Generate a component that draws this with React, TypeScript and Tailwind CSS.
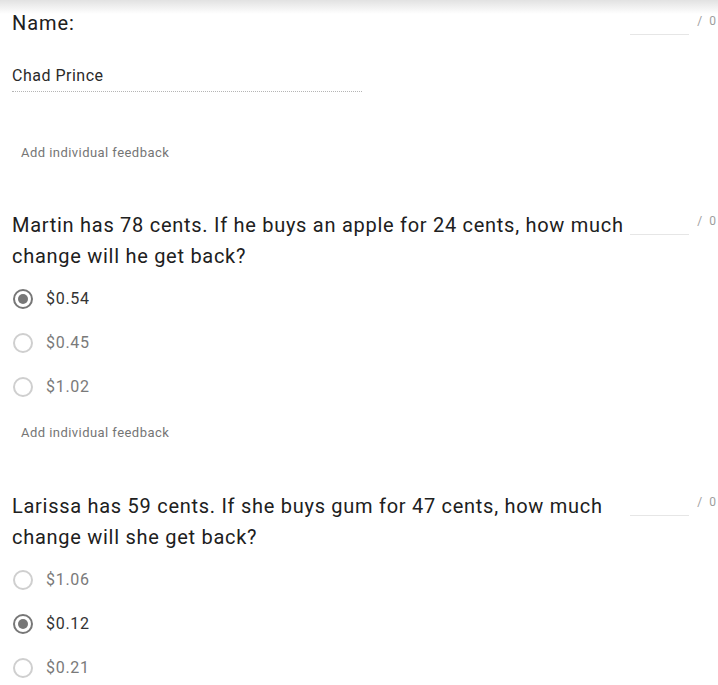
import React from "react";

type Option = { label: string; selected?: boolean };

const questions: { text: string; options: Option[]; feedback: boolean }[] = [
  {
    text: "Martin has 78 cents. If he buys an apple for 24 cents, how much change will he get back?",
    options: [{ label: "$0.54", selected: true }, { label: "$0.45" }, { label: "$1.02" }],
    feedback: true,
  },
  {
    text: "Larissa has 59 cents. If she buys gum for 47 cents, how much change will she get back?",
    options: [{ label: "$1.06" }, { label: "$0.12", selected: true }, { label: "$0.21" }],
    feedback: false,
  },
];

const Points = () => (
  <div className="w-[88px] shrink-0 flex items-start">
    <div className="w-[60px] h-[25px] border-b border-[#e6e6e6]" />
    <span className="ml-[8px] mt-[3px] whitespace-nowrap text-[12px] leading-[16px] text-[#9e9e9e] tracking-[2px]">/ 0</span>
  </div>
);

const Feedback = () => (
  <div className="ml-[9px] text-[13px] leading-[16px] tracking-[0.45px] text-[#757575]">Add individual feedback</div>
);

const Radio = ({ selected }: { selected?: boolean }) => (
  <div
    className={
      selected
        ? "w-[20px] h-[20px] rounded-full border-2 border-[#777777] flex items-center justify-center"
        : "w-[20px] h-[20px] rounded-full border-2 border-[#cfcfcf]"
    }
  >
    {selected && <div className="w-[10px] h-[10px] rounded-full bg-[#777777]" />}
  </div>
);

export default function App() {
  return (
    <div
      className="relative w-full h-[685px] overflow-hidden bg-white pl-[12px]"
      style={{ fontFamily: "Roboto, 'Liberation Sans', sans-serif" }}
    >
      {/* top shadow */}
      <div className="absolute left-0 right-0 top-0 h-[14px] bg-gradient-to-b from-[#e2e2e2] to-white" />

      {/* Name */}
      <div className="relative flex pt-[10px]">
        <div className="flex-1 text-[20px] leading-[26px] tracking-[0.9px] text-[#202020]">Name:</div>
        <Points />
      </div>
      <div className="mt-[30px] w-[350px] border-b border-dotted border-[#b5b5b5] pb-[5px] text-[16px] leading-[20px] tracking-[0.5px] text-[#2a2a2a]">
        Chad Prince
      </div>
      <div className="mt-[53px]">
        <Feedback />
      </div>

      {questions.map((q, i) => (
        <div key={i} className={i === 0 ? "mt-[49px]" : "mt-[50px]"}>
          <div className="flex">
            <div className="flex-1 pr-[2px] text-[20px] leading-[31px] tracking-[0.72px] text-[#202020]">{q.text}</div>
            <Points />
          </div>
          <div className="mt-[5px] flex flex-col">
            {q.options.map((o) => (
              <div key={o.label} className="h-[44px] flex items-center gap-[13px] pl-[1px]">
                <Radio selected={o.selected} />
                <span
                  className={
                    o.selected
                      ? "text-[16px] tracking-[0.7px] text-[#333333]"
                      : "text-[16px] tracking-[0.7px] text-[#7a7a7a]"
                  }
                >
                  {o.label}
                </span>
              </div>
            ))}
          </div>
          {q.feedback && (
            <div className="mt-[16px]">
              <Feedback />
            </div>
          )}
        </div>
      ))}
    </div>
  );
}
